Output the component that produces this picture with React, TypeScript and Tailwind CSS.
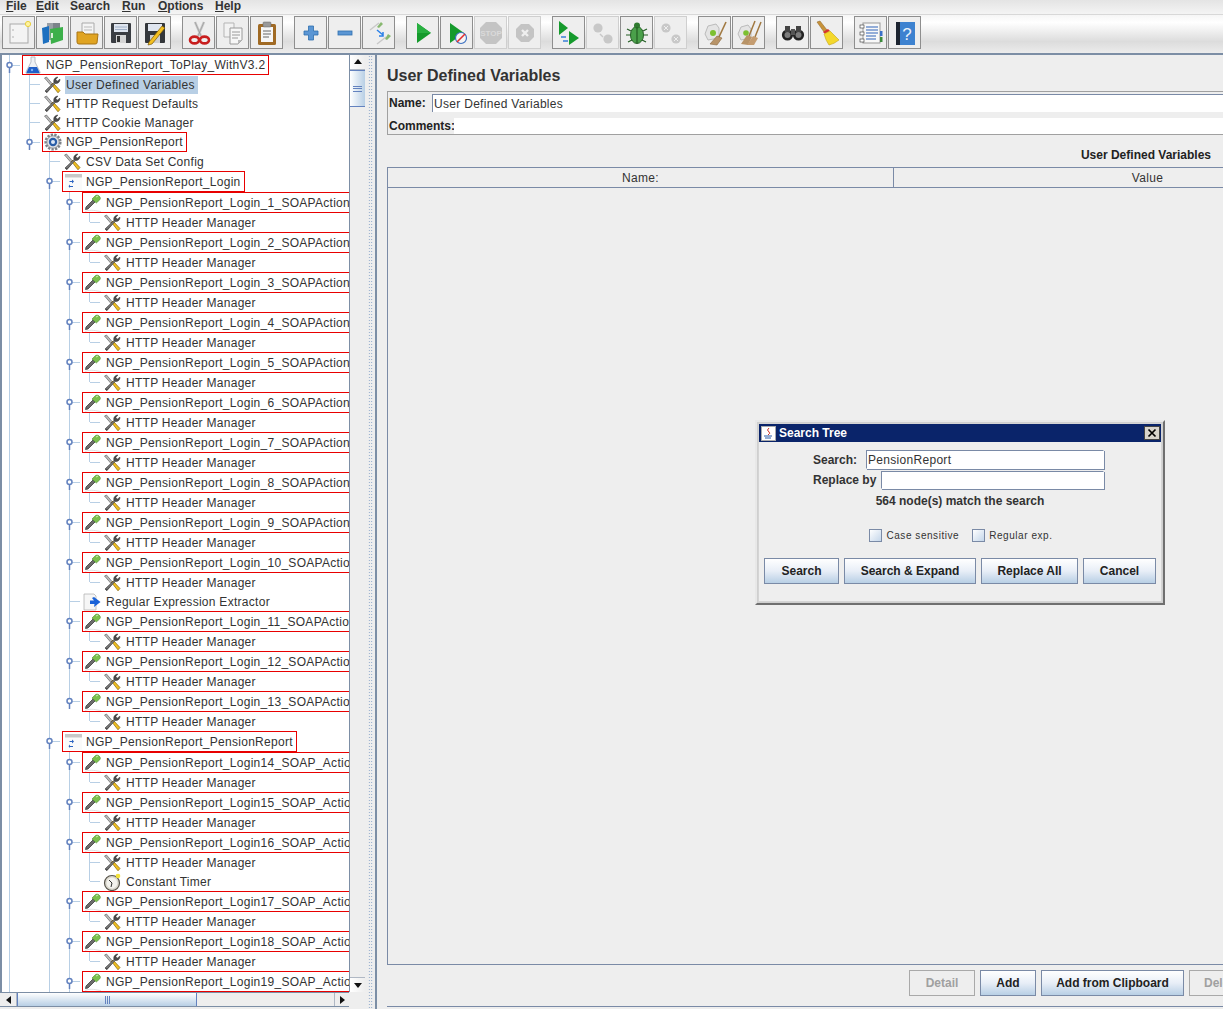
import type { ReactNode } from 'react';

type Kind = 'plan' | 'config' | 'group' | 'ctrl' | 'sampler' | 'regex' | 'timer';

type Row = {
  label: string;
  kind: Kind;
  depth: number;
  h: number;
  boxed?: boolean;
  selected?: boolean;
  handle?: boolean;
  lines: number[];
  half?: number;
};

const rows: Row[] = [
  { label: 'NGP_PensionReport_ToPlay_WithV3.2', kind: 'plan', depth: 0, h: 20, boxed: true, handle: true, lines: [10] },
  { label: 'User Defined Variables', kind: 'config', depth: 1, h: 19, selected: true, lines: [10, 30] },
  { label: 'HTTP Request Defaults', kind: 'config', depth: 1, h: 19, lines: [10, 30] },
  { label: 'HTTP Cookie Manager', kind: 'config', depth: 1, h: 19, lines: [10, 30] },
  { label: 'NGP_PensionReport', kind: 'group', depth: 1, h: 20, boxed: true, handle: true, lines: [10], half: 30 },
  { label: 'CSV Data Set Config', kind: 'config', depth: 2, h: 19, lines: [10, 50] },
  { label: 'NGP_PensionReport_Login', kind: 'ctrl', depth: 2, h: 21, boxed: true, handle: true, lines: [10, 50] },
];

const header = (lines: number[], half = 90): Row => ({ label: 'HTTP Header Manager', kind: 'config', depth: 4, h: 19, lines, half });
const sampler = (label: string, lines: number[], half?: number): Row => ({ label, kind: 'sampler', depth: 3, h: 21, boxed: true, handle: true, lines, half });

for (let n = 1; n <= 13; n++) {
  const last = n === 13;
  const suffix = n < 10 ? 'SOAPAction_' : 'SOAPAction';
  rows.push(sampler(`NGP_PensionReport_Login_${n}_${suffix}`, last ? [10, 50] : [10, 50, 70], last ? 70 : undefined));
  rows.push(header(last ? [10, 50] : [10, 50, 70]));
  if (n === 10) rows.push({ label: 'Regular Expression Extractor', kind: 'regex', depth: 3, h: 19, lines: [10, 50, 70] });
}
rows.push({ label: 'NGP_PensionReport_PensionReport', kind: 'ctrl', depth: 2, h: 21, boxed: true, handle: true, lines: [10, 50] });
for (let n = 14; n <= 19; n++) {
  rows.push(sampler(`NGP_PensionReport_Login${n}_SOAP_Action`, [10, 50, 70]));
  if (n === 19) break;
  if (n === 16) {
    rows.push({ ...header([10, 50, 70, 90]) , half: undefined });
    rows.push({ label: 'Constant Timer', kind: 'timer', depth: 4, h: 19, lines: [10, 50, 70], half: 90 });
  } else {
    rows.push(header([10, 50, 70]));
  }
}

function Wrench() {
  return (
    <svg width="18" height="18" viewBox="0 0 18 18" className="shrink-0">
      <path d="M1.5 2 L3.5 1 L9.5 8 L8 9.5 Z" fill="#b9b9b9" stroke="#555" strokeWidth="0.6" />
      <path d="M8.5 8.5 L10 7 L17 14.5 L15 16.8 Z" fill="#f0c020" stroke="#80600c" strokeWidth="0.7" />
      <path d="M2 15 L11 6.5 C10.2 4 11.5 1.5 14.8 1 L12.8 3.6 L14.2 5.2 L17 3.2 C17 6.3 14.5 8 12 7.4 L3.8 16.8 Z" fill="#4c4c4c" stroke="#222" strokeWidth="0.5" />
      <path d="M3.5 15 L11.5 7" stroke="#bbb" strokeWidth="0.7" />
    </svg>
  );
}

function Flask() {
  return (
    <svg width="18" height="18" viewBox="0 0 18 18" className="shrink-0">
      <path d="M7 1 H11 V6 L16 16 Q16.5 17.5 15 17.5 H3 Q1.5 17.5 2 16 L7 6 Z" fill="#eef1f5" stroke="#a8afb9" strokeWidth="0.8" />
      <path d="M5 11 H13 L15.5 16.4 Q15.6 17 15 17 H3 Q2.4 17 2.5 16.4 Z" fill="#1f5fc8" />
      <circle cx="8" cy="14" r="1.2" fill="#7db0f5" />
    </svg>
  );
}

function Gear() {
  return (
    <svg width="18" height="18" viewBox="0 0 18 18" className="shrink-0">
      <circle cx="9" cy="9" r="7" fill="#c9ccd1" stroke="#7d8288" strokeWidth="3.2" strokeDasharray="2.2 1.2" />
      <circle cx="9" cy="9" r="6" fill="#dfe2e6" stroke="#9a9ea4" strokeWidth="0.7" />
      <circle cx="9" cy="9" r="4.2" fill="#2a5ea8" />
      <circle cx="9" cy="9" r="2" fill="#dbe7f6" />
    </svg>
  );
}

function Ctrl() {
  return (
    <svg width="18" height="18" viewBox="0 0 18 18" className="shrink-0">
      <rect x="1" y="1" width="17" height="16" fill="#fafafa" />
      <rect x="1" y="1" width="17" height="3.5" fill="#c8c8c8" />
      <path d="M5 8 H8 V6.5 L10 8.5 L8 10.5 V9 H6 Z" fill="#2a62c0" />
      <path d="M8 13 H5 V11.5 L3.5 13.2 L5 15 V14 H8 Z" fill="#2a62c0" transform="translate(1 0)" />
    </svg>
  );
}

function Pipette() {
  return (
    <svg width="18" height="18" viewBox="0 0 18 18" className="shrink-0">
      <path d="M1 17.5 C7 15 12 17 17 17.5" stroke="#d8d8d8" strokeWidth="0.8" fill="none" />
      <path d="M1.5 15.5 L2 13 L9 6 L11 8 L4 15 Z" fill="#6c6c6c" stroke="#2c2c2c" strokeWidth="0.7" />
      <path d="M8 5 L11.5 1.6 Q13 0.5 14.6 1.6 L16 3 Q17 4.5 15.6 6 L12.3 9 Z" fill="#7cc04c" stroke="#4e8a2c" strokeWidth="0.6" />
      <path d="M12 3 L14 2" stroke="#c9eeb0" strokeWidth="1" />
    </svg>
  );
}

function Regex() {
  return (
    <svg width="18" height="18" viewBox="0 0 18 18" className="shrink-0">
      <path d="M1 1 H11 L13 3 V17 H1 Z" fill="#f6f6f6" stroke="#b5b5b5" strokeWidth="0.8" />
      <path d="M9 5 L11 4 L17.5 9 L11 14 L11.5 11 H7 V7.5 H11 Z" fill="#1a62d8" />
    </svg>
  );
}

function Timer() {
  return (
    <svg width="18" height="18" viewBox="0 0 18 18" className="shrink-0">
      <circle cx="9" cy="10" r="7.5" fill="#dad8ce" stroke="#57534a" strokeWidth="1.2" />
      <circle cx="9" cy="10" r="5.4" fill="#f4f3ee" />
      <path d="M6 7 L9 10 L8 14" stroke="#333" strokeWidth="1" fill="none" />
      <circle cx="15" cy="3" r="2.3" fill="#f2e23c" />
    </svg>
  );
}

const treeIcons: Record<Kind, () => ReactNode> = {
  plan: Flask,
  config: Wrench,
  group: Gear,
  ctrl: Ctrl,
  sampler: Pipette,
  regex: Regex,
  timer: Timer,
};

function Guides({ row }: { row: Row }) {
  const left = 22 + row.depth * 20;
  const conn = left - 12;
  const mid = Math.floor(row.h / 2);
  return (
    <svg width={left} height={row.h} className="shrink-0">
      {row.lines.map((x) => (
        <line key={x} x1={x - 0.5} x2={x - 0.5} y1={0} y2={row.h} stroke="#b8cfe5" />
      ))}
      {row.half && <line x1={row.half - 0.5} x2={row.half - 0.5} y1={0} y2={mid} stroke="#b8cfe5" />}
      <line x1={conn} x2={left - 2} y1={mid + 0.5} y2={mid + 0.5} stroke="#b8cfe5" />
      {row.handle && (
        <>
          <line x1={conn - 0.5} x2={conn - 0.5} y1={mid} y2={mid + 8} stroke="#6382bf" strokeWidth="1.5" />
          <circle cx={conn - 0.5} cy={mid} r="2.5" fill="#fff" stroke="#6382bf" strokeWidth="1.5" />
        </>
      )}
    </svg>
  );
}

function TreeRow({ row }: { row: Row }) {
  const Icon = treeIcons[row.kind];
  return (
    <div className="flex shrink-0 items-stretch" style={{ height: row.h }}>
      <Guides row={row} />
      {row.boxed ? (
        <div className="flex shrink-0 items-center whitespace-nowrap border border-[#e80000] pl-px pr-[3px] min-w-0">
          <Icon />
          <span className="ml-1 tracking-[0.28px]">{row.label}</span>
        </div>
      ) : (
        <div className="flex shrink-0 items-center whitespace-nowrap pl-px">
          <Icon />
          <span className={`ml-1 px-px tracking-[0.28px] ${row.selected ? 'bg-[#b8cfe5] pr-[3px] leading-[18px]' : ''}`}>{row.label}</span>
        </div>
      )}
    </div>
  );
}

function Arrow({ dir }: { dir: 'up' | 'down' | 'left' | 'right' }) {
  const pts = { up: '1,7 9,7 5,2', down: '1,3 9,3 5,8', left: '7,1 7,9 2,5', right: '3,1 3,9 8,5' }[dir];
  return (
    <svg width="10" height="10" viewBox="0 0 10 10">
      <polygon points={pts} fill="#111" />
    </svg>
  );
}

function ToolBtn({ children, off }: { children: ReactNode; off?: boolean }) {
  return (
    <div className={`flex size-[33px] items-center justify-center border bg-[#eeeeee] ${off ? 'border-[#cfcfcf]' : 'border-[#8e8e8e]'}`}>
      {children}
    </div>
  );
}

const I = ({ children }: { children: ReactNode }) => (
  <svg width="26" height="26" viewBox="0 0 26 26">
    {children}
  </svg>
);

const toolbarGroups: { off?: boolean; icon: ReactNode }[][] = [
  [
    { icon: <I><rect x="4" y="4" width="18" height="19" fill="#f4f4f4" stroke="#a9a9a9" /><circle cx="7" cy="10" r="0.7" fill="#999" /><circle cx="7" cy="17" r="0.7" fill="#999" /><circle cx="22" cy="4" r="2.6" fill="#fff3a0" stroke="#e8d040" /></I> },
    { icon: <I><rect x="7" y="3" width="7" height="17" fill="#9aa0a6" /><rect x="13" y="3" width="7" height="17" fill="#7c838a" /><path d="M2 8 L9 6 V22 L3 24 Z" fill="#1d70c0" /><path d="M10 9 L23 7 V20 L11 24 Z" fill="#3cb04a" /><rect x="11" y="13" width="2" height="5" fill="#d8f0d8" /></I> },
    { icon: <I><path d="M8 3 H20 V16 H8 Z" fill="#f4f4f4" stroke="#aaa" /><path d="M10 7 H18 M10 10 H18" stroke="#bbb" /><path d="M3 12 H9 L11 14 H24 L23 23 Q23 24 21 24 H5 Q3 24 3 22 Z" fill="#e0a422" stroke="#a87414" /></I> },
    { icon: <I><rect x="3" y="3" width="20" height="20" rx="1" fill="#3a3d42" /><rect x="6" y="4" width="14" height="8" fill="#dfe5ef" /><path d="M7 7 H19 M7 9.5 H19" stroke="#9fb0c8" /><rect x="8" y="15" width="10" height="8" fill="#d5d5d5" /><rect x="9" y="16" width="3" height="6" fill="#333" /></I> },
    { icon: <I><rect x="3" y="3" width="20" height="20" rx="1" fill="#34373b" /><rect x="6" y="4" width="14" height="7" fill="#dfe5ef" /><rect x="8" y="15" width="10" height="8" fill="#cfcfcf" /><path d="M7 22 L20 6 L23 8 L10 24 L6 25 Z" fill="#f4c020" stroke="#7a5808" strokeWidth="0.7" /></I> },
  ],
  [
    { icon: <I><path d="M9 2 L15 16 M18 2 L12 16" stroke="#c7c7c7" strokeWidth="2.4" /><path d="M9 2 L15 16 M18 2 L12 16" stroke="#8f8f8f" strokeWidth="0.6" /><ellipse cx="8.5" cy="20" rx="4.5" ry="3.4" fill="none" stroke="#c81e1e" strokeWidth="2.6" /><ellipse cx="18.5" cy="20" rx="4.5" ry="3.4" fill="none" stroke="#c81e1e" strokeWidth="2.6" /></I> },
    { icon: <I><path d="M4 3 H14 V17 H4 Z" fill="#f2f2f2" stroke="#b5b5b5" /><path d="M10 8 H22 V20 L18 24 H10 Z" fill="#f7f7f7" stroke="#9a9a9a" /><path d="M12 12 H20 M12 15 H20 M12 18 H18" stroke="#9a9a9a" /><path d="M18 24 V20 H22 Z" fill="#bbb" /></I> },
    { icon: <I><rect x="4" y="4" width="18" height="21" rx="1.5" fill="#a06a24" /><rect x="7" y="7" width="12" height="15" fill="#f6f6f6" /><rect x="9" y="2" width="8" height="5" rx="1" fill="#999" stroke="#666" strokeWidth="0.5" /><path d="M9 11 H17 M9 14 H17 M9 17 H15" stroke="#666" /></I> },
  ],
  [
    { icon: <I><path d="M10.5 6 H15.5 V11 H20 V15 H15.5 V20 H10.5 V15 H6 V11 H10.5 Z" fill="#5b96d4" stroke="#2f6fae" strokeWidth="0.8" /></I> },
    { icon: <I><rect x="6" y="11" width="14" height="4" fill="#5b96d4" stroke="#2f6fae" strokeWidth="0.8" /></I> },
    { icon: <I><path d="M4 10 L13 3" stroke="#c8c8c8" strokeWidth="1.4" /><path d="M11 7 L15 2 L17 4 L13 8 Z" fill="#88b870" /><path d="M11 24 L20 17" stroke="#c8c8c8" strokeWidth="1.4" /><path d="M19 19 L22 14 L25 16 L21 20 Z" fill="#88b870" /><path d="M11 10 L17 15 M17 12 V16 H13" stroke="#2a80e8" strokeWidth="1.5" fill="none" /></I> },
  ],
  [
    { icon: <I><path d="M7 3 L21 13 L7 23 Z" fill="#159a2c" /><path d="M7 3 L21 13 H7 Z" fill="#28b040" /></I> },
    { icon: <I><path d="M6 3 L20 13 L6 23 Z" fill="#159a2c" /><circle cx="17" cy="18" r="5.5" fill="#f4f4f4" stroke="#3a6fc0" strokeWidth="1.2" /><path d="M13 22 L21 14" stroke="#e03030" strokeWidth="1.6" /></I> },
    { off: true, icon: <I><path d="M8 2 H18 L24 8 V18 L18 24 H8 L2 18 V8 Z" fill="#c4c4c4" /><text x="13" y="16" fontSize="8" fontWeight="700" textAnchor="middle" fill="#dadada" fontFamily="Liberation Sans">STOP</text></I> },
    { off: true, icon: <I><path d="M9 4 H17 L22 9 V17 L17 22 H9 L4 17 V9 Z" fill="#c4c4c4" /><path d="M10 10 L16 16 M16 10 L10 16" stroke="#efefef" strokeWidth="2.4" /></I> },
  ],
  [
    { icon: <I><path d="M3 1 L12 8 L3 15 Z" fill="#159a2c" /><path d="M13 11 L23 18 L13 25 Z" fill="#159a2c" /><path d="M5 17 H10 M7 21 H12" stroke="#3a80d8" strokeWidth="1.6" /></I> },
    { off: true, icon: <I><circle cx="8" cy="8" r="4.6" fill="#c8c8c8" /><circle cx="18" cy="19" r="4.6" fill="#c8c8c8" /><path d="M10 14 L13 17" stroke="#c8c8c8" strokeWidth="1.4" /></I> },
    { icon: <I><ellipse cx="13" cy="15" rx="6.5" ry="8.5" fill="#4aa04a" stroke="#245e24" /><circle cx="13" cy="5.5" r="3" fill="#2f7a2f" /><path d="M13 7 V23 M3 9 L7 11 M23 9 L19 11 M2 15 H6 M24 15 H20 M4 22 L8 20 M22 22 L18 20" stroke="#245e24" strokeWidth="1.2" /></I> },
    { off: true, icon: <I><circle cx="8" cy="8" r="4.6" fill="#c8c8c8" /><circle cx="18" cy="19" r="4.6" fill="#c8c8c8" /><path d="M6 6 L10 10 M10 6 L6 10 M16 17 L20 21 M20 17 L16 21" stroke="#eee" /></I> },
  ],
  [
    { icon: <I><path d="M6 6 L14 4 L17 8 L17 18 L6 20 L3 14 Z" fill="#e4e4e4" stroke="#bbb" /><circle cx="11" cy="13" r="3" fill="#7cc030" /><path d="M24 2 L17 17" stroke="#a07840" strokeWidth="1.6" /><path d="M15 16 L20 18 L15 25 L8 24 Z" fill="#b89468" stroke="#8c6a40" strokeWidth="0.6" /></I> },
    { icon: <I><path d="M5 7 L12 5 L15 9 L15 18 L5 20 L2 14 Z" fill="#e4e4e4" stroke="#bbb" /><circle cx="10" cy="13" r="2.8" fill="#7cc030" /><path d="M19 1 L13 16 M25 2 L19 17" stroke="#a07840" strokeWidth="1.5" /><path d="M11 15 L16 17 L12 25 L5 24 Z" fill="#b89468" /><path d="M17 16 L22 18 L18 25 L11 25 Z" fill="#c49c70" /></I> },
  ],
  [
    { icon: <I><circle cx="7.5" cy="15" r="5.6" fill="#222" /><circle cx="18.5" cy="15" r="5.6" fill="#222" /><rect x="11" y="9" width="4" height="6" fill="#555" /><rect x="5" y="6" width="5" height="6" fill="#444" /><rect x="16" y="6" width="5" height="6" fill="#444" /><circle cx="7.5" cy="15" r="3" fill="#7c7c7c" /><circle cx="18.5" cy="15" r="3" fill="#7c7c7c" /></I> },
    { icon: <I><path d="M3 2 L6 1 L13 10 L10 12 Z" fill="#c8933a" stroke="#8a6020" strokeWidth="0.5" /><path d="M9 12 L14 9 L16 11 L11 14 Z" fill="#d83030" /><path d="M10 14 L16 11 L25 20 Q20 24 15 25 Q12 21 10 14 Z" fill="#f4d82c" stroke="#c4a414" strokeWidth="0.6" /></I> },
  ],
  [
    { icon: <I><rect x="5" y="3" width="17" height="20" fill="#f8f8f8" stroke="#999" /><path d="M8 7 H20 M8 10 H20 M8 13 H20 M8 16 H18 M8 19 H18" stroke="#2e62b8" strokeWidth="1.2" /><rect x="2" y="5" width="4" height="3" fill="#fff" stroke="#333" strokeWidth="0.6" /><rect x="2" y="12" width="4" height="3" fill="#fff" stroke="#333" strokeWidth="0.6" /><rect x="2" y="19" width="4" height="3" fill="#fff" stroke="#333" strokeWidth="0.6" /><rect x="22" y="11" width="2.5" height="5" fill="#3a70c8" /><rect x="22" y="17" width="2.5" height="5" fill="#3c8a3c" /></I> },
    { icon: <I><rect x="6" y="2" width="17" height="23" fill="#3d82d0" /><rect x="4" y="2" width="4" height="23" fill="#1c2430" /><text x="15" y="20" fontSize="17" textAnchor="middle" fill="#eaf2fb" fontFamily="Liberation Sans">?</text></I> },
  ],
];

function JavaBtn({ children, w, off, blue = true }: { children: ReactNode; w: number; off?: boolean; blue?: boolean }) {
  return (
    <div
      className={`flex h-[26px] shrink-0 items-center justify-center border text-[12px] font-bold ${
        off ? 'border-[#a9a9a9] bg-[#eeeeee] text-[#a0a0a0]' : 'border-[#7a8aa6] text-[#222] bg-gradient-to-b from-white via-[#e8eef7] to-[#b8cfe5]'
      } ${blue ? '' : ''}`}
      style={{ width: w }}
    >
      {children}
    </div>
  );
}

function Check({ label }: { label: string }) {
  return (
    <div className="flex items-center gap-[4px]">
      <div className="size-[13px] border border-[#7a8aa6] bg-gradient-to-br from-white to-[#c4d6ea]" />
      <span className="text-[10px] tracking-[0.55px] text-[#333]">{label}</span>
    </div>
  );
}

function SearchDialog() {
  return (
    <div className="absolute left-[755px] top-[420px] flex h-[185px] w-[410px] flex-col border-[2px] border-b-[#6f6f6f] border-l-[#e8e8e8] border-r-[#6f6f6f] border-t-[#e8e8e8] bg-[#d4d4d4] p-[2px] shadow-[inset_0_0_0_1px_#cfcfcf]">
      <div className="flex h-[18px] shrink-0 items-center bg-[#0a246a] pl-[2px] pr-[1px]">
        <div className="flex size-[15px] items-center justify-center border border-[#aaa] bg-white">
          <svg width="13" height="13" viewBox="0 0 13 13">
            <path d="M7 1 Q4 3 7 5 Q9 6 6 8" stroke="#d03020" fill="none" />
            <path d="M2 9 H10 M3 11 H9" stroke="#2a5ca8" strokeWidth="1.2" />
          </svg>
        </div>
        <span className="ml-[3px] flex-1 text-[12px] font-bold text-white">Search Tree</span>
        <div className="flex h-[14px] w-[16px] items-center justify-center border border-[#444] bg-[#d8d4cc]">
          <svg width="10" height="10" viewBox="0 0 10 10">
            <path d="M1.5 1.5 L8.5 8.5 M8.5 1.5 L1.5 8.5" stroke="#000" strokeWidth="1.7" />
          </svg>
        </div>
      </div>
      <div className="flex flex-1 flex-col bg-[#eeeeee] text-[#333]">
        <div className="mt-[8px] flex h-[19px] items-center">
          <span className="ml-[54px] w-[53px] text-[12px] font-bold">Search:</span>
          <div className="flex h-[19px] w-[238px] items-center border border-[#7a8aa6] border-b-white border-r-white bg-white pl-[1px] text-[12px] tracking-[0.3px] shadow-[1px_1px_0_#7a8aa6]">
            PensionReport
          </div>
        </div>
        <div className="mt-[2px] flex h-[18px] items-center">
          <span className="ml-[54px] w-[68px] text-[12px] font-bold">Replace by</span>
          <div className="h-[18px] w-[223px] border border-[#7a8aa6] border-b-white border-r-white bg-white shadow-[1px_1px_0_#7a8aa6]" />
        </div>
        <div className="mt-[3px] h-[18px] text-center text-[12px] font-bold leading-[18px]">564 node(s) match the search</div>
        <div className="mt-[17px] flex h-[16px] justify-center gap-[13px] pl-[2px]">
          <Check label="Case sensitive" />
          <Check label="Regular exp." />
        </div>
        <div className="mt-[15px] flex gap-[5px] pl-[5px]">
          <JavaBtn w={75}>Search</JavaBtn>
          <JavaBtn w={132}>Search &amp; Expand</JavaBtn>
          <JavaBtn w={97}>Replace All</JavaBtn>
          <JavaBtn w={73}>Cancel</JavaBtn>
        </div>
      </div>
    </div>
  );
}

export default function App() {
  return (
    <div className="relative flex h-[1009px] w-[1223px] flex-col overflow-hidden bg-[#eeeeee] font-['Liberation_Sans',Arial,sans-serif] text-[12px] text-[#333]">
      {/* menu bar, cut at the top of the shot */}
      <div className="flex h-[14px] shrink-0 items-end overflow-hidden bg-gradient-to-b from-[#e4e4e4] to-[#f4f4f4] pb-[1px] text-[12px] font-bold leading-[13px] text-[#333]">
        <span className="ml-[6px] w-[30px]"><u>F</u>ile</span>
        <span className="w-[34px]"><u>E</u>dit</span>
        <span className="w-[52px]">Search</span>
        <span className="w-[36px]"><u>R</u>un</span>
        <span className="w-[57px]"><u>O</u>ptions</span>
        <span><u>H</u>elp</span>
      </div>

      {/* toolbar */}
      <div className="flex h-[39px] shrink-0 border-t border-[#d8d8d8] bg-[linear-gradient(#f6f6f6,#ffffff_20%,#dcdcdc_70%,#ececec)] pl-[2px] pt-[1px]">
        <div className="flex h-[33px] gap-[11px]">
          {toolbarGroups.map((group, g) => (
            <div key={`group-${g}`} className="flex gap-px">
              {group.map((b, i) => (
                <ToolBtn key={`btn-${i}`} off={b.off}>
                  {b.icon}
                </ToolBtn>
              ))}
            </div>
          ))}
        </div>
      </div>

      <div className="flex min-h-0 flex-1 border-t-2 border-[#7c8ea5]">
        {/* left: tree + scrollbars */}
        <div className="flex w-[365px] shrink-0 flex-col">
          <div className="flex h-[937px] shrink-0">
            <div className="h-full w-[350px] shrink-0 overflow-hidden border-r border-[#7c8ea5] bg-white text-[#333] shadow-[inset_2px_0_0_#7c8ea5]">
              {rows.map((row, i) => (
                <TreeRow key={`row-${i}`} row={row} />
              ))}
            </div>
            <div className="flex w-[15px] shrink-0 flex-col bg-[#eeeeee]">
              <div className="flex h-[15px] items-center justify-center border-b border-[#b0b8c4] bg-gradient-to-r from-white to-[#eeeeee]">
                <Arrow dir="up" />
              </div>
              <div className="flex h-[37px] items-center justify-center border-y border-[#6382bf] bg-gradient-to-r from-white to-[#b8cfe5]">
                <div className="h-[6px] w-[9px] border-y border-[#6382bf] bg-[linear-gradient(transparent_1px,#6382bf_1px,#6382bf_2px,transparent_2px)]" />
              </div>
              <div className="flex-1" />
              <div className="flex h-[15px] items-center justify-center border-t border-[#b0b8c4] bg-gradient-to-r from-white to-[#eeeeee]">
                <Arrow dir="down" />
              </div>
            </div>
          </div>
          <div className="flex h-[15px] w-[349px] shrink-0 border-y border-[#7c8ea5] bg-[#eeeeee] pl-[2px]">
            <div className="flex w-[15px] items-center justify-center border-r border-[#b0b8c4]">
              <Arrow dir="left" />
            </div>
            <div className="flex w-[180px] items-center justify-center border-x border-[#6382bf] bg-gradient-to-b from-white to-[#b8cfe5]">
              <div className="h-[8px] w-[5px] border-x border-[#6382bf] bg-[linear-gradient(90deg,transparent_1px,#6382bf_1px,#6382bf_2px,transparent_2px)]" />
            </div>
            <div className="flex-1" />
            <div className="flex w-[15px] items-center justify-center border-l border-[#b0b8c4]">
              <Arrow dir="right" />
            </div>
          </div>
        </div>

        {/* splitter */}
        <div className="flex w-[10px] shrink-0 justify-center">
          <div className="h-full w-[5px] bg-[radial-gradient(#7f9cc4_0.7px,transparent_0.8px)] bg-[size:2.5px_3px]" />
        </div>

        {/* right: selected element */}
        <div className="flex min-w-0 flex-1 flex-col overflow-hidden border-l-2 border-[#7c8ea5] pl-[10px]">
          <div className="mt-[11px] h-[20px] shrink-0 whitespace-nowrap text-[16px] font-bold leading-[20px] text-[#333]">User Defined Variables</div>
          <div className="mt-[5px] h-[44px] w-[900px] shrink-0 border border-[#a0a0a0] pl-px pt-[2px] text-[#222]">
            <div className="flex h-[18px] items-center">
              <span className="w-[43px] text-[12px] font-bold">Name:</span>
              <div className="flex h-[18px] flex-1 items-center border-l border-t border-[#7a8aa6] bg-white pl-px tracking-[0.3px] text-[#333]">User Defined Variables</div>
            </div>
            <div className="mt-[6px] flex h-[16px] items-center">
              <span className="w-[65px] text-[12px] font-bold">Comments:</span>
              <div className="h-[16px] flex-1 bg-white" />
            </div>
          </div>
          <div className="mt-[13px] h-[15px] w-[824px] shrink-0 text-right text-[12px] font-bold leading-[15px] text-[#222]">User Defined Variables</div>
          <div className="mt-[4px] flex h-[798px] w-[1015px] shrink-0 flex-col border border-[#7a8aa6]">
            <div className="flex h-[20px] shrink-0 border-b border-[#7a8aa6] tracking-[0.3px]">
              <div className="flex w-[506px] items-center justify-center border-r border-[#7a8aa6]">Name:</div>
              <div className="flex flex-1 items-center justify-center">Value</div>
            </div>
          </div>
          <div className="mt-[5px] flex shrink-0 gap-[5px] pl-[522px]">
            <JavaBtn w={66} off>Detail</JavaBtn>
            <JavaBtn w={56}>Add</JavaBtn>
            <JavaBtn w={143}>Add from Clipboard</JavaBtn>
            <JavaBtn w={66} off>Delete</JavaBtn>
          </div>
          <div className="mt-[10px] h-px w-[900px] shrink-0 bg-[#7a8aa6]" />
        </div>
      </div>

      <SearchDialog />
    </div>
  );
}
